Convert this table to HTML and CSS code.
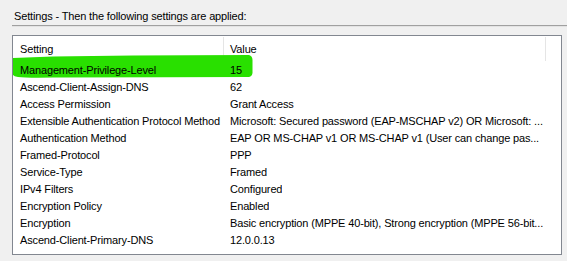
FILE: index.html
```html
<!DOCTYPE html>
<html lang="en">
<head>
    <meta charset="UTF-8">
    <meta name="viewport" content="width=device-width, initial-scale=1.0">
    <title>Settings</title>
    <link rel="stylesheet" href="styles.css">
</head>
<body>
    <div class="group-title">Settings - Then the following settings are applied:</div>
    <div class="rule"></div>

    <div class="list-box">
        <div class="list-head">
            <div class="col-setting">Setting</div>
            <div class="col-value">Value</div>
            <div class="col-rest"></div>
        </div>
        <div class="list-body">
            <!-- marker highlight over the first row -->
            <svg class="marker" width="240" height="24" viewBox="0 0 240 24">
                <path d="M0 3 L40 1.5 L120 0.5 L236 0 Q239.5 1 239.5 5 L239.5 18 Q239 21.5 236 22 L150 22.3 L40 22.6 Q12 23 5 22 Q1 21.5 0 20 Z" fill="#29e000"/>
            </svg>
            <div class="row"><div class="col-setting">Management-Privilege-Level</div><div class="col-value">15</div></div>
            <div class="row"><div class="col-setting">Ascend-Client-Assign-DNS</div><div class="col-value">62</div></div>
            <div class="row"><div class="col-setting">Access Permission</div><div class="col-value">Grant Access</div></div>
            <div class="row"><div class="col-setting">Extensible Authentication Protocol Method</div><div class="col-value">Microsoft: Secured password (EAP-MSCHAP v2) OR Microsoft: ...</div></div>
            <div class="row"><div class="col-setting">Authentication Method</div><div class="col-value">EAP OR MS-CHAP v1 OR MS-CHAP v1 (User can change pas...</div></div>
            <div class="row"><div class="col-setting">Framed-Protocol</div><div class="col-value">PPP</div></div>
            <div class="row"><div class="col-setting">Service-Type</div><div class="col-value">Framed</div></div>
            <div class="row"><div class="col-setting">IPv4 Filters</div><div class="col-value">Configured</div></div>
            <div class="row"><div class="col-setting">Encryption Policy</div><div class="col-value">Enabled</div></div>
            <div class="row"><div class="col-setting">Encryption</div><div class="col-value">Basic encryption (MPPE 40-bit), Strong encryption (MPPE 56-bit...</div></div>
            <div class="row"><div class="col-setting">Ascend-Client-Primary-DNS</div><div class="col-value">12.0.0.13</div></div>
        </div>
    </div>
</body>
</html>
```

FILE: styles.css
```css
* {
    box-sizing: border-box;
}
body {
    margin: 0;
    background-color: #f0f0f0;
    font-family: "Liberation Sans", Arial, sans-serif;
    font-size: 11px;
    letter-spacing: -0.15px;
    color: #000;
}
.group-title {
    padding: 9px 0 0 14px;
    height: 25px;
    line-height: 15px;
}
.rule {
    margin-left: 12px;
    height: 2px;
    border-top: 1px solid #a0a0a0;
    border-bottom: 1px solid #e3e3e3;
}
.list-box {
    margin: 8px 0 0 12px;
    width: 550px;
    height: 220px;
    background-color: #fff;
    border: 1px solid #828790;
    padding-top: 1px;
    overflow: hidden;
}
.list-head {
    display: flex;
    height: 24px;
    line-height: 25px;
}
.list-head .col-setting,
.list-head .col-value {
    border-right: 1px solid #e5e5e5;
}
.list-head .col-value {
    width: 322px;
}
.col-rest {
    flex: 1;
}
.list-body {
    position: relative;
    padding-top: 1px;
}
.marker {
    position: absolute;
    left: 0;
    top: -6px;
}
.row {
    position: relative;
    display: flex;
    height: 17px;
    line-height: 17px;
}
.col-setting {
    flex-shrink: 0;
    width: 211px;
    padding-left: 7px;
    white-space: nowrap;
    overflow: hidden;
}
.col-value {
    flex-shrink: 0;
    padding-left: 6px;
    white-space: nowrap;
    overflow: hidden;
}
```
